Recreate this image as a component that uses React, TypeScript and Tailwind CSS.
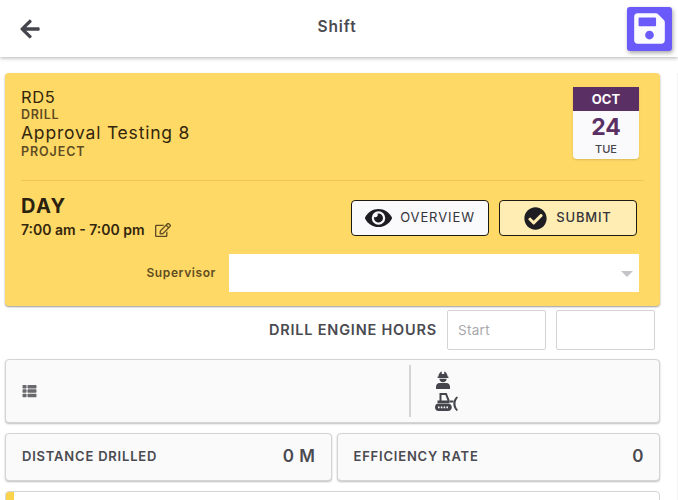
import { FaArrowLeft, FaCheckCircle, FaEye, FaRegEdit, FaSave, FaThList } from "react-icons/fa";

function WorkerIcon() {
  return (
    <svg width="16" height="19" viewBox="0 0 16 19" fill="currentColor" aria-hidden>
      <path d="M3.400 5.600C3.400 2.900 5.200 .8 6.800 .4V3h2.400V.4c1.600.4 3.400 2.500 3.400 5.200h.8v1.300H2.600V5.600h.8z" />
      <path d="M4.400 7.800h7.200c0 2-1.600 3.400-3.600 3.400S4.400 9.800 4.400 7.800z" />
      <path d="M4.600 12h6.800c2 0 3.600 1.600 3.600 3.600V18H1v-2.400C1 13.600 2.600 12 4.600 12z" />
    </svg>
  );
}

function DozerIcon() {
  return (
    <svg width="23" height="20" viewBox="0 0 23 20" fill="currentColor" aria-hidden>
      <path fillRule="evenodd" d="M4.500 1h7.200l3 7.500V11H2.500V8.500h2V1zm2 2v5.500h6L10.400 3H6.500z" />
      <path fillRule="evenodd" d="M3.500 11.500h9.500c2.200 0 3.800 1.500 3.800 3.700s-1.600 3.800-3.800 3.800H3.500C1.400 19 0 17.400 0 15.200s1.400-3.700 3.500-3.700zM3 14.400v1.800h1.600v-1.800H3zm2.800 0v1.800h1.600v-1.800H5.800zm2.800 0v1.800h1.600v-1.800H8.600zm2.800 0v1.800H13v-1.800h-1.600z" />
      <path d="M15 8.500h3.500v2H15z" />
      <path d="M21.500 4.500L23 5.600c-1.700 1.900-2.500 3.900-2.500 6.100s.8 4.200 2.500 6.200L21.500 19c-2.200-2.300-3.200-4.700-3.200-7.300s1-5 3.200-7.200z" />
    </svg>
  );
}

function StatCard({ label, value, className }: { label: string; value: string; className: string }) {
  return (
    <div className={`flex h-[48px] items-center justify-between rounded-[4px] border border-[#d4d4d4] bg-[#fafafa] pl-4 pr-[15px] shadow-[0_1px_2px_rgba(0,0,0,0.25)] ${className}`}>
      <span className="text-[13px] font-semibold tracking-[0.8px] text-[#4a4a50]">{label}</span>
      <span className="text-[17px] font-semibold tracking-[0.5px] text-[#4a4a50]">{value}</span>
    </div>
  );
}

export default function App() {
  return (
    <div className="h-[500px] w-[678px] overflow-hidden bg-white font-['Inter',sans-serif]">
      <header className="flex h-[57px] items-center pl-[19px] pr-[6px] shadow-[0_1px_4px_rgba(0,0,0,0.3)]">
        <FaArrowLeft className="h-[22px] w-[22px] text-[#45454d]" />
        <h1 className="mb-[3px] flex-1 pl-[6px] text-center text-[15.5px] font-semibold tracking-[0.9px] text-[#4a4a50]">Shift</h1>
        <button className="flex h-[44px] w-[45px] items-center justify-center rounded-[3px] bg-[#6a5af9] shadow-[1px_2px_4px_rgba(0,0,0,0.35)]">
          <FaSave className="h-[35px] w-[35px] text-[#fafaff]" />
        </button>
      </header>

      <main className="border-r border-[#f4f4f4] pl-[5px] pr-[17px]">
        <section className="mt-[16px] h-[233px] rounded-[4px] bg-[#ffd966] px-4 pt-[14px] shadow-[0_1px_2px_rgba(0,0,0,0.4)]">
          <div className="flex items-start justify-between pr-[5px]">
            <div className="text-[#33260c]">
              <div className="text-[16.5px] leading-[20px] tracking-[0.6px]">RD5</div>
              <div className="text-[12.5px] font-semibold leading-[15px] tracking-[0.7px] text-[#5e4c22]">DRILL</div>
              <div className="text-[17.5px] leading-[21px] tracking-[0.8px]">Approval Testing 8</div>
              <div className="mt-[1px] text-[12.5px] font-semibold leading-[15px] tracking-[0.9px] text-[#5e4c22]">PROJECT</div>
            </div>
            <div className="w-[66px] overflow-hidden rounded-b-[4px] bg-[#faf9fb] text-center shadow-[0_1px_2px_rgba(0,0,0,0.15)]">
              <div className="h-[24px] bg-[#5a2f63] text-[13px] font-bold leading-[24px] text-white">OCT</div>
              <div className="mt-[3px] text-[23px] font-bold leading-[27px] text-[#5a2f63]">24</div>
              <div className="h-[18px] text-[11px] font-medium leading-[16px] text-[#45454d]">TUE</div>
            </div>
          </div>

          <div className="mt-[21px] border-t border-[#eec653]" />

          <div className="mt-[13px] flex items-start justify-between pr-[7px]">
            <div>
              <div className="text-[20px] font-bold leading-[24px] tracking-[1.300px] text-[#2a210e]">DAY</div>
              <div className="mt-[2px] flex items-center gap-[10px] text-[14px] font-semibold leading-[20px] text-[#33260c]">
                <span>7:00 am - 7:00 pm</span>
                <FaRegEdit className="h-[16px] w-[16px] text-[#5e4c22]" />
              </div>
            </div>
            <div className="mt-[6px] flex gap-[10px]">
              <button className="flex h-[36px] w-[138px] items-center justify-center gap-[8px] rounded-[4px] border border-[#1f1a10] bg-[#faf9fb] text-[13px] tracking-[0.9px] text-[#33333a]">
                <FaEye className="h-[24px] w-[27px] text-[#1e1e22]" />
                OVERVIEW
              </button>
              <button className="flex h-[36px] w-[138px] items-center justify-center gap-[9px] rounded-[4px] border border-[#1f1a10] bg-[#ffedb3] text-[13px] font-medium tracking-[0.8px] text-[#33333a]">
                <FaCheckCircle className="h-[23px] w-[23px] text-[#1e1e22]" />
                SUBMIT
              </button>
            </div>
          </div>

          <div className="mt-[14px] flex items-center justify-end gap-[13px] pr-[5px]">
            <span className="text-[12px] font-semibold tracking-[0.6px] text-[#5e4c22]">Supervisor</span>
            <div className="flex h-[38px] w-[410px] items-center justify-end bg-white pr-[6px]">
              <div className="mt-[2px] h-0 w-0 border-x-[6px] border-t-[6px] border-x-transparent border-t-[#c4c4c8]" />
            </div>
          </div>
        </section>

        <div className="mt-[4px] flex items-center justify-end gap-[10px] pr-[5px]">
          <span className="text-[14.5px] font-semibold tracking-[0.8px] text-[#4a4a50]">DRILL ENGINE HOURS</span>
          <input readOnly placeholder="Start" className="h-[40px] w-[99px] rounded-[2px] border border-[#d4d4d4] bg-white px-[10px] text-[13.5px] tracking-[0.3px] placeholder:text-[#a8a8ac]" />
          <input readOnly className="h-[40px] w-[99px] rounded-[2px] border border-[#d4d4d4] bg-white px-[10px] text-[13px]" />
        </div>

        <div className="mt-[9px] flex h-[64px] items-center rounded-[4px] border border-[#d4d4d4] bg-[#fafafa] shadow-[0_1px_2px_rgba(0,0,0,0.25)]">
          <div className="w-[403px] pl-4">
            <FaThList className="h-[14px] w-[15px] text-[#6a6a6e]" />
          </div>
          <div className="h-[52px] w-[2px] bg-[#d4d4d4]" />
          <div className="flex flex-col items-start gap-[2px] pl-[24px] text-[#45454d]">
            <WorkerIcon />
            <DozerIcon />
          </div>
        </div>

        <div className="mt-[10px] flex gap-[5px]">
          <StatCard label="DISTANCE DRILLED" value="0 M" className="w-[327px]" />
          <StatCard label="EFFICIENCY RATE" value="0" className="w-[324px]" />
        </div>

        <div className="mt-[10px] h-[40px] overflow-hidden rounded-[4px] border border-[#d4d4d4] bg-white">
          <div className="h-full w-[8px] bg-[#fcd34d]" />
        </div>
      </main>
    </div>
  );
}
